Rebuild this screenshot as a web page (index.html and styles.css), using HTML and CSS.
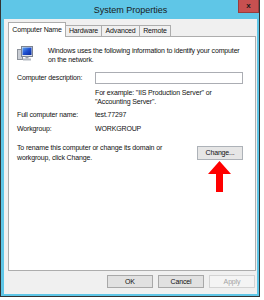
FILE: index.html
```html
<!DOCTYPE html>
<html>
<head>
<meta charset="utf-8">
<link rel="stylesheet" href="styles.css">
</head>
<body>
<div class="window">
  <div class="titlebar">
    <div class="title">System Properties</div>
    <div class="close">x</div>
  </div>
  <div class="dialog">
    <div class="tabs">
      <div class="tab active">Computer Name</div>
      <div class="tab">Hardware</div>
      <div class="tab">Advanced</div>
      <div class="tab">Remote</div>
    </div>
    <div class="panel">
      <div class="intro">
        <svg class="icon" width="16" height="15" viewBox="0 0 16 15">
          <defs>
            <linearGradient id="scr" x1="0" y1="0" x2="1" y2="1">
              <stop offset="0" stop-color="#5aa2f0"/>
              <stop offset="0.5" stop-color="#1f4fd0"/>
              <stop offset="1" stop-color="#0a2a9a"/>
            </linearGradient>
          </defs>
          <rect x="0.5" y="3.5" width="5" height="10" fill="#c9cdd4" stroke="#8d929b"/>
          <rect x="4.5" y="0.5" width="11" height="10" fill="#dfe2e7" stroke="#7d8490"/>
          <rect x="5.5" y="1.5" width="9" height="7.5" fill="url(#scr)"/>
          <rect x="8.5" y="10.5" width="3" height="2" fill="#9aa0aa"/>
          <rect x="6" y="12.5" width="8" height="2" fill="#b4b9c1"/>
        </svg>
        <div class="intro-text">Windows uses the following information to identify your computer<br>on the network.</div>
      </div>
      <div class="row desc-row">
        <div class="label">Computer description:</div>
        <div class="input"></div>
      </div>
      <div class="row example">
        <div></div>
        <div>For example: "IIS Production Server" or<br>"Accounting Server".</div>
      </div>
      <div class="row info first-info">
        <div class="label">Full computer name:</div>
        <div>test.77297</div>
      </div>
      <div class="row info second-info">
        <div class="label">Workgroup:</div>
        <div>WORKGROUP</div>
      </div>
      <div class="rename">
        <div class="rename-text">To rename this computer or change its domain or<br>workgroup, click Change.</div>
        <div class="btn change">Change...</div>
      </div>
      <svg class="arrow" width="23" height="31" viewBox="0 0 23 31">
        <polygon points="11.5,0 23,13 15,13 15,31 8,31 8,13 0,13" fill="#ff0000"/>
      </svg>
    </div>
    <div class="buttons">
      <div class="btn">OK</div>
      <div class="btn">Cancel</div>
      <div class="btn disabled">Apply</div>
    </div>
  </div>
</div>
</body>
</html>
```
FILE: styles.css
```css
html, body {
  margin: 0;
  padding: 0;
  background: #ffffff;
}
body {
  font-family: "Liberation Sans", Arial, sans-serif;
  font-size: 7px;
  letter-spacing: -0.15px;
  color: #111;
}
.window {
  width: 260px;
  height: 297px;
  box-sizing: border-box;
  border: 1px solid #333;
  border-top: none;
  background: #5fc6e7;
  display: flex;
  flex-direction: column;
}
.titlebar {
  height: 19px;
  display: flex;
  align-items: flex-start;
}
.title {
  flex: 1;
  padding-left: 22px;
  text-align: center;
  font-size: 9px;
  letter-spacing: 0;
  line-height: 20px;
  color: #1a1a1a;
}
.close {
  width: 21px;
  height: 13px;
  box-sizing: border-box;
  background: #c75050;
  border: 1px solid #9a3c3c;
  border-top: none;
  color: #1a1a1a;
  font-weight: bold;
  font-size: 8px;
  line-height: 11px;
  text-align: center;
}
.dialog {
  flex: 1;
  margin: 0 2px 2px 3px;
  background: #f0f0f0;
  display: flex;
  flex-direction: column;
}
.tabs {
  display: flex;
  height: 15px;
  margin: 3px 0 -1px 4px;
  position: relative;
  z-index: 1;
}
.tab {
  height: 11px;
  margin-top: 3px;
  margin-left: -1px;
  box-sizing: border-box;
  border: 1px solid #adadad;
  border-bottom: none;
  background: #f0f0f0;
  text-align: center;
  line-height: 10px;
  width: 37px;
}
.tab:nth-child(3) { width: 39px; }
.tab:nth-child(4) { width: 32px; }
.tab.active {
  margin-left: 0;
  width: 58px;
  height: 15px;
  margin-top: 0;
  background: #ffffff;
  line-height: 14px;
  position: relative;
  z-index: 1;
}
.panel {
  flex: 1;
  margin: 0 1px 0 4px;
  background: #ffffff;
  border: 1px solid #adadad;
  padding: 9px 12px 0 8px;
  position: relative;
  line-height: 9px;
}
.intro {
  display: flex;
  gap: 15px;
}
.icon {
  flex: none;
  display: block;
}
.row {
  display: grid;
  grid-template-columns: 78px 1fr;
}
.desc-row {
  margin-top: 8px;
  line-height: 12px;
}
.input {
  height: 12px;
  box-sizing: border-box;
  border: 1px solid #abadb3;
  background: #fff;
}
.example { margin-top: 4px; }
.first-info { margin-top: 4px; }
.second-info { margin-top: 5px; }
.rename {
  margin-top: 10px;
  display: flex;
  align-items: center;
  line-height: 9.5px;
}
.btn {
  width: 46px;
  height: 13px;
  box-sizing: border-box;
  border: 1px solid #a8a8a8;
  background: #e1e1e1;
  text-align: center;
  line-height: 11px;
}
.change {
  margin-left: auto;
  height: 14px;
  line-height: 12px;
  border-color: #adb2b8;
  background: #e6e6e6;
}
.arrow {
  position: absolute;
  left: 199px;
  top: 124px;
  display: block;
}
.buttons {
  display: flex;
  justify-content: flex-end;
  gap: 5px;
  margin: 4px 2px 6px 0;
}
.btn.disabled {
  background: #f4f4f4;
  border-color: #d3d3d3;
  color: #a3a3a3;
}
```
